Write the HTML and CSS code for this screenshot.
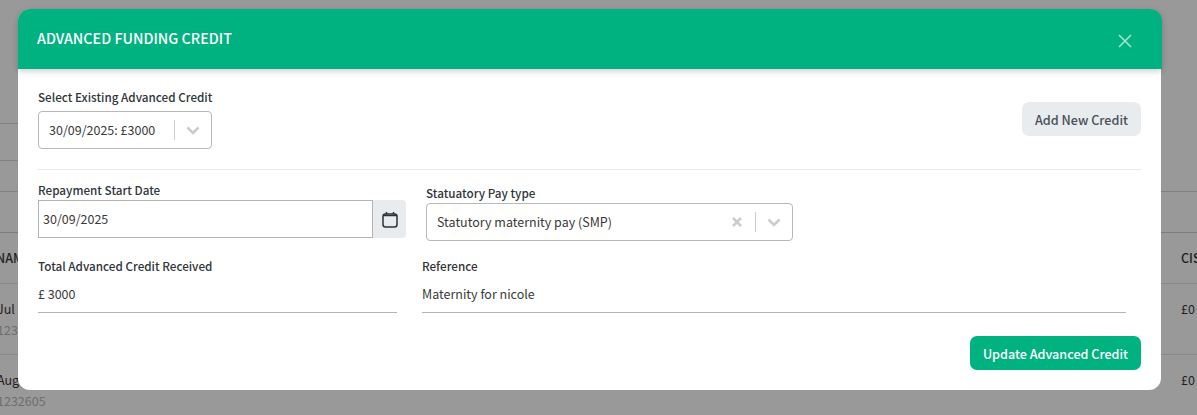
FILE: index.html
```html
<!DOCTYPE html>
<html lang="en">

<head>
    <meta charset="utf-8">
    <title>Advanced Funding Credit</title>
    <link rel="stylesheet" href="styles.css">
</head>

<body>
    <!-- Page behind the modal -->
    <div class="page">
        <div class="page-top"></div>
        <div class="page-filter"></div>
        <div class="page-toolbar"></div>
        <div class="page-tabs"></div>
        <div class="table-head"><span>NAME</span><span class="table-col">CIS</span></div>
        <div class="table-row">
            <div><p>Jul 2025</p><p class="muted">1232604</p></div>
            <p class="table-col">£0</p>
        </div>
        <div class="table-row">
            <div><p>Aug 2025</p><p class="muted">1232605</p></div>
            <p class="table-col">£0</p>
        </div>
    </div>

    <div class="modal">
        <div class="modal-header">
            <h2>ADVANCED FUNDING CREDIT</h2>
            <svg class="close-icon" width="14" height="14" viewBox="0 0 14 14">
                <path d="M1 1l12 12M13 1L1 13" />
            </svg>
        </div>

        <div class="modal-body">
            <div class="existing-row">
                <div>
                    <label class="field-label">Select Existing Advanced Credit</label>
                    <div class="select select-existing">
                        <span class="select-value">30/09/2025: £3000</span>
                        <span class="select-sep"></span>
                        <svg class="chevron" width="14" height="9" viewBox="0 0 14 9">
                            <path d="M1.500 1.500L7 7l5.500-5.500" />
                        </svg>
                    </div>
                </div>
                <button class="btn btn-grey">Add New Credit</button>
            </div>

            <div class="form-row">
                <div class="date-field">
                    <label class="field-label">Repayment Start Date</label>
                    <div class="date-group">
                        <span class="date-input">30/09/2025</span>
                        <span class="date-addon">
                            <svg width="16" height="17" viewBox="0 0 16 17">
                                <rect x="1" y="3" width="14" height="13" rx="2.500" />
                                <path d="M1 4.500h14M4.500 1v2M11.500 1v2" />
                            </svg>
                        </span>
                    </div>
                </div>
                <div class="pay-field">
                    <label class="field-label">Statuatory Pay type</label>
                    <div class="select select-pay">
                        <span class="select-value">Statutory maternity pay (SMP)</span>
                        <svg class="clear" width="10" height="10" viewBox="0 0 10 10">
                            <path d="M1 1l8 8M9 1L1 9" />
                        </svg>
                        <span class="select-sep"></span>
                        <svg class="chevron" width="14" height="9" viewBox="0 0 14 9">
                            <path d="M1.500 1.500L7 7l5.500-5.500" />
                        </svg>
                    </div>
                </div>
            </div>

            <div class="form-row text-row">
                <div class="total-field">
                    <label class="field-label">Total Advanced Credit Received</label>
                    <div class="line-input">£ 3000</div>
                </div>
                <div class="reference-field">
                    <label class="field-label">Reference</label>
                    <div class="line-input">Maternity for nicole</div>
                </div>
            </div>

            <div class="modal-footer">
                <button class="btn btn-green">Update Advanced Credit</button>
            </div>
        </div>
    </div>
</body>

</html>
```

FILE: styles.css
```css
* {
    margin: 0;
    padding: 0;
    box-sizing: border-box;
}

html,
body {
    height: 100%;
    overflow: hidden;
    background: #999;
    color: #2f353b;
    font-family: "Noto Sans CJK SC", "Noto Sans", sans-serif;
    font-size: 12.5px;
    line-height: 18px;
}

/* Page behind the modal */
.page {
    height: 100%;
    color: #1f1f1f;
}

.page-top {
    width: 300px;
    height: 124px;
    border-bottom: 1px solid #808080;
}

.page-filter {
    width: 300px;
    height: 37px;
    border-bottom: 1px solid #808080;
}

.page-toolbar {
    height: 31px;
    border-bottom: 1px solid #808080;
}

.page-tabs {
    height: 41px;
    border-bottom: 1px solid #7c7c7c;
}

.table-head {
    display: flex;
    justify-content: space-between;
    height: 51px;
    margin-left: -4px;
    padding-top: 16px;
    border-bottom: 1px solid #8a8a8a;
    font-weight: 500;
}

.table-row {
    display: flex;
    justify-content: space-between;
    height: 71px;
    margin-left: -3px;
    padding-top: 16px;
    border-bottom: 1px solid #8a8a8a;
}

.table-col {
    width: 16px;
    white-space: nowrap;
}

.muted {
    margin-top: 3px;
    color: #6e6e6e;
}

/* Modal */
.modal {
    position: absolute;
    top: 9px;
    left: 18px;
    width: 1143px;
    height: 381px;
    background: #fff;
    border-radius: 12px;
}

.modal-header {
    display: flex;
    justify-content: space-between;
    align-items: center;
    height: 60px;
    margin-right: -1px;
    padding: 0 30px 2px 19px;
    background: #00b27f;
    border-radius: 12px 12px 0 0;
    box-shadow: 0 2px 6px rgba(0, 0, 0, 0.2);
}

.modal-header h2 {
    color: #fff;
    font-size: 14.300px;
    font-weight: 500;
}

.close-icon {
    margin-top: 6px;
}

.close-icon path {
    fill: none;
    stroke: #a6e6d2;
    stroke-width: 1.500;
}

.modal-body {
    padding: 19px 20px 0;
}

.field-label {
    display: block;
    font-size: 11.700px;
    font-weight: 500;
}

/* Selects */
.select {
    display: flex;
    align-items: center;
    height: 38px;
    background: #fff;
    border: 1px solid #b8b8b8;
    border-radius: 4px;
    color: #3a3a3a;
}

.select-value {
    flex: 1;
}

.select-existing {
    width: 174px;
    margin-top: 5px;
    padding: 0 11px 0 10px;
}

.select-pay {
    width: 367px;
    margin-top: 1px;
    padding: 0 11px 0 10px;
}

.select-sep {
    width: 1px;
    height: 20px;
    margin-right: 11px;
    background: #ccc;
}

.chevron path,
.clear path {
    fill: none;
    stroke: #ccc;
    stroke-width: 2.500;
}

.clear {
    margin-right: 13px;
}

/* Buttons */
.btn {
    height: 34px;
    border: 0;
    border-radius: 7px;
    font-family: inherit;
    font-size: 12.600px;
    font-weight: 500;
}

.btn-grey {
    width: 119px;
    margin-top: 14px;
    background: #e9ecef;
    color: #495057;
}

.btn-green {
    width: 171px;
    background: #00b27f;
    color: #fff;
}

.existing-row {
    display: flex;
    justify-content: space-between;
    align-items: flex-start;
    height: 82px;
    border-bottom: 1px solid #e9e9e9;
}

.form-row {
    display: flex;
    margin-top: 11px;
}

/* Date field */
.date-field {
    width: 368px;
}

.date-group {
    display: flex;
    height: 38px;
    margin-top: 1px;
}

.date-input {
    flex: 1;
    padding: 0 4px;
    border: 1px solid #b4b4b4;
    color: #3a3a3a;
    line-height: 36px;
}

.date-addon {
    display: flex;
    align-items: center;
    justify-content: center;
    width: 33px;
    background: #e9ecef;
    border-radius: 0 4px 4px 0;
}

.date-addon rect,
.date-addon path {
    fill: none;
    stroke: #2b3238;
    stroke-width: 1.500;
}

.pay-field {
    margin-left: 20px;
    margin-top: 3px;
}

/* Underlined inputs */
.text-row {
    margin-top: 16px;
}

.total-field {
    width: 359px;
}

.reference-field {
    width: 704px;
    margin-left: 25px;
}

.line-input {
    height: 32px;
    margin-top: 6px;
    padding-top: 4px;
    border-bottom: 1px solid #b4b4b4;
    color: #3a3a3a;
}

.modal-footer {
    display: flex;
    justify-content: flex-end;
    margin-top: 23px;
}
```
